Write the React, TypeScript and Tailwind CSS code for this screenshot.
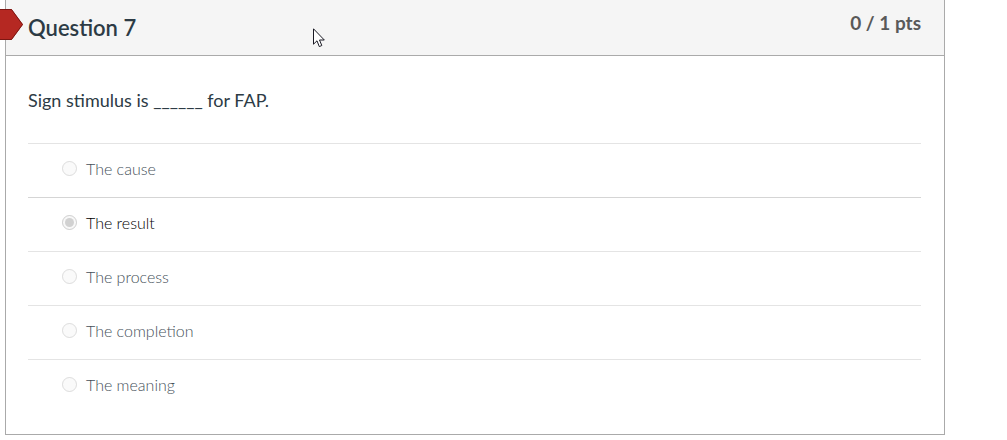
interface Answer {
  id: string;
  text: string;
}

const answers: Answer[] = [
  { id: 'cause', text: 'The cause' },
  { id: 'result', text: 'The result' },
  { id: 'process', text: 'The process' },
  { id: 'completion', text: 'The completion' },
  { id: 'meaning', text: 'The meaning' },
];

const selectedId = 'result';

function IncorrectFlag() {
  return (
    <svg className="absolute top-2 left-0 h-8 w-6" viewBox="0 0 24 32" aria-hidden="true">
      <path d="M0 1H11.5L23 16.5L11.5 32H0Z" fill="#b52822" />
      <path d="M0 1.5H11.5L22.5 16.5L11.5 31.5H0" fill="none" stroke="#7d1713" />
    </svg>
  );
}

function Pointer() {
  return (
    <svg className="absolute top-7 left-[313px] h-5 w-3" viewBox="0 0 12 20" aria-hidden="true">
      <path
        d="M0.5 0.8V16.2L4 12.8L6.3 18.6L8.8 17.5L6.5 12H11.3Z"
        fill="#fff"
        stroke="#1a1a24"
        strokeWidth="1"
      />
    </svg>
  );
}

function AnswerRow({ answer, selected }: { answer: Answer; selected: boolean }) {
  return (
    <label
      className={`flex items-start gap-[9px] border-t pt-[13px] pb-4 pl-[34px] text-[16px] leading-6 font-light ${
        selected ? 'border-[#d5d5d5] text-black' : 'border-[#e4e4e4] text-[#46515a]'
      }`}
    >
      <input
        type="radio"
        name="answer"
        value={answer.id}
        defaultChecked={selected}
        disabled
        className={`mt-1 size-[15px] ${selected ? '' : 'opacity-70'}`}
      />
      {answer.text}
    </label>
  );
}

export default function App() {
  return (
    <main className="relative bg-white pr-[62px] pb-[5px] pl-[5px] font-['Lato',sans-serif] text-[#2d3b45]">
      <section className="border-x border-b border-[#aaaaaa]">
        <header className="flex items-start justify-between border-b border-[#aaaaaa] bg-[#f5f5f5] pt-[11px] pr-[23px] pb-3 pl-[22px]">
          <h1 className="pt-[2px] text-[22px] leading-[30px] font-semibold">Question 7</h1>
          <p className="text-[19px] leading-6 font-bold text-[#595959]">0 / 1 pts</p>
        </header>
        <div className="pt-[31px] pr-[23px] pb-[21px] pl-[22px]">
          <p id="question" className="text-[18px] leading-[27px]">
            Sign stimulus is ______ for FAP.
          </p>
          <fieldset className="mt-[29px]" aria-labelledby="question">
            {answers.map((answer) => (
              <AnswerRow key={answer.id} answer={answer} selected={answer.id === selectedId} />
            ))}
          </fieldset>
        </div>
      </section>
      <IncorrectFlag />
      <Pointer />
    </main>
  );
}
